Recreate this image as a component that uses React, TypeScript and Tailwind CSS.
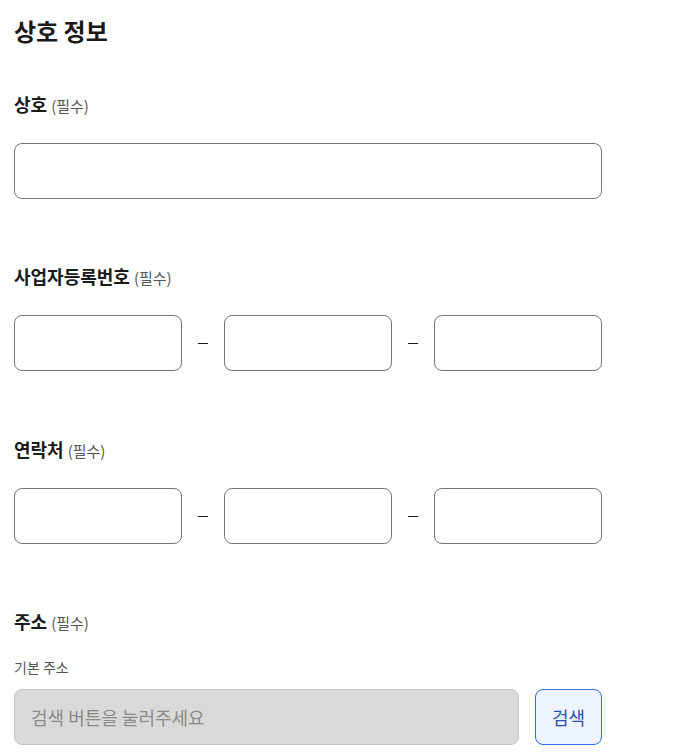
// 상호 정보 form section: business name, registration number, phone, address

const font = { fontFamily: '"Noto Sans CJK KR", "Noto Sans", sans-serif' };

function Label({ text }: { text: string }) {
  return (
    <div className="flex h-6 items-baseline gap-1 leading-6">
      <span className="text-[18px] font-bold text-[#1a1a1a]">{text}</span>
      <span className="text-[15px] text-[#555555]">(필수)</span>
    </div>
  );
}

function Box({ className = "" }: { className?: string }) {
  return (
    <input
      type="text"
      className={`h-[56px] rounded-lg border border-[#767676] bg-white px-4 text-[16px] outline-none ${className}`}
    />
  );
}

function Dash() {
  return (
    <div className="flex w-[42px] justify-center">
      <div className="h-px w-[10px] bg-[#1a1a1a]" />
    </div>
  );
}

function SplitRow() {
  return (
    <div className="flex items-center">
      <Box className="w-[168px]" />
      <Dash />
      <Box className="w-[168px]" />
      <Dash />
      <Box className="w-[168px]" />
    </div>
  );
}

export default function App() {
  return (
    <div className="min-h-screen bg-white" style={font}>
      <div className="w-[602px] pl-[14px] pt-[15px]">
        <h1 className="h-8 text-[24px] font-bold leading-8 text-[#1a1a1a]">상호 정보</h1>

        <div className="mt-[45px]">
          <Label text="상호" />
          <Box className="mt-[27px] w-[588px]" />
        </div>

        <div className="mt-[65px]">
          <Label text="사업자등록번호" />
          <div className="mt-[27px]">
            <SplitRow />
          </div>
        </div>

        <div className="mt-[66px]">
          <Label text="연락처" />
          <div className="mt-[27px]">
            <SplitRow />
          </div>
        </div>

        <div className="mt-[65px]">
          <Label text="주소" />
          <div className="mt-[24px] h-5 text-[14px] leading-5 text-[#555555]">기본 주소</div>
          <div className="mt-[12px] flex gap-[16px]">
            <div className="flex h-[56px] w-[505px] items-center rounded-lg border border-[#c4c4c4] bg-[#d9d9d9] px-4 text-[18px] text-[#8a8a8a]">
              검색 버튼을 눌러주세요
            </div>
            <button className="h-[56px] w-[67px] rounded-lg border border-[#2f6fe4] bg-[#eef4ff] text-[18px] text-[#2c4fa8]">
              검색
            </button>
          </div>
        </div>
      </div>
    </div>
  );
}
